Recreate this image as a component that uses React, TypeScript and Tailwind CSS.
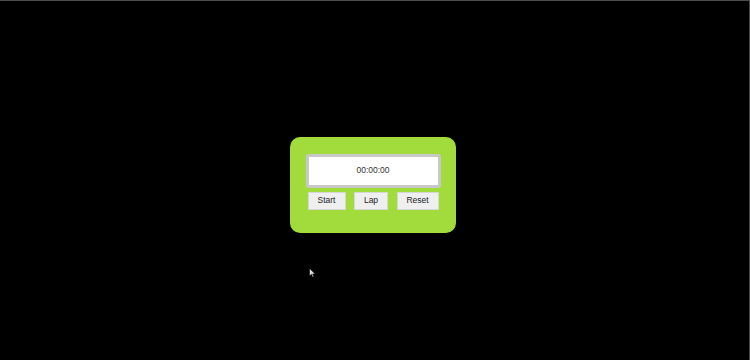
export default function App() {
  return (
    <main className="relative flex h-[360px] w-[750px] items-center justify-center overflow-hidden border-t border-r border-[#4b4b4b] bg-black pt-2 pr-1 font-['Liberation_Sans',Arial,sans-serif]">
      <section className="w-[166px] rounded-[10px] bg-[#a2dc3c] pt-[17px] pr-[15px] pb-[23px] pl-[16px]">
        <div className="flex h-[34px] items-center justify-center rounded-[3px] border-[3px] border-[#c8c8c8] bg-white text-[8.5px] text-[#333]">
          00:00:00
        </div>
        <div className="mt-[4px] flex justify-between px-[2px]">
          <button className="h-[18px] w-[38px] border border-[#d6d6d6] bg-[#efefef] text-[8.5px] text-[#222]">Start</button>
          <button className="h-[18px] w-[34px] border border-[#d6d6d6] bg-[#efefef] text-[8.5px] text-[#222]">Lap</button>
          <button className="h-[18px] w-[42px] border border-[#d6d6d6] bg-[#efefef] text-[8.5px] text-[#222]">Reset</button>
        </div>
      </section>
      <svg className="absolute left-[309px] top-[267px]" width="7" height="10" viewBox="0 0 7 10" aria-hidden="true">
        <path d="M0.5 0.5 L0.5 8 L2.4 6.3 L3.7 9.2 L4.8 8.7 L3.6 5.9 L6.2 5.9 Z" fill="#ddd" stroke="#000" strokeWidth="0.5" />
      </svg>
    </main>
  );
}
